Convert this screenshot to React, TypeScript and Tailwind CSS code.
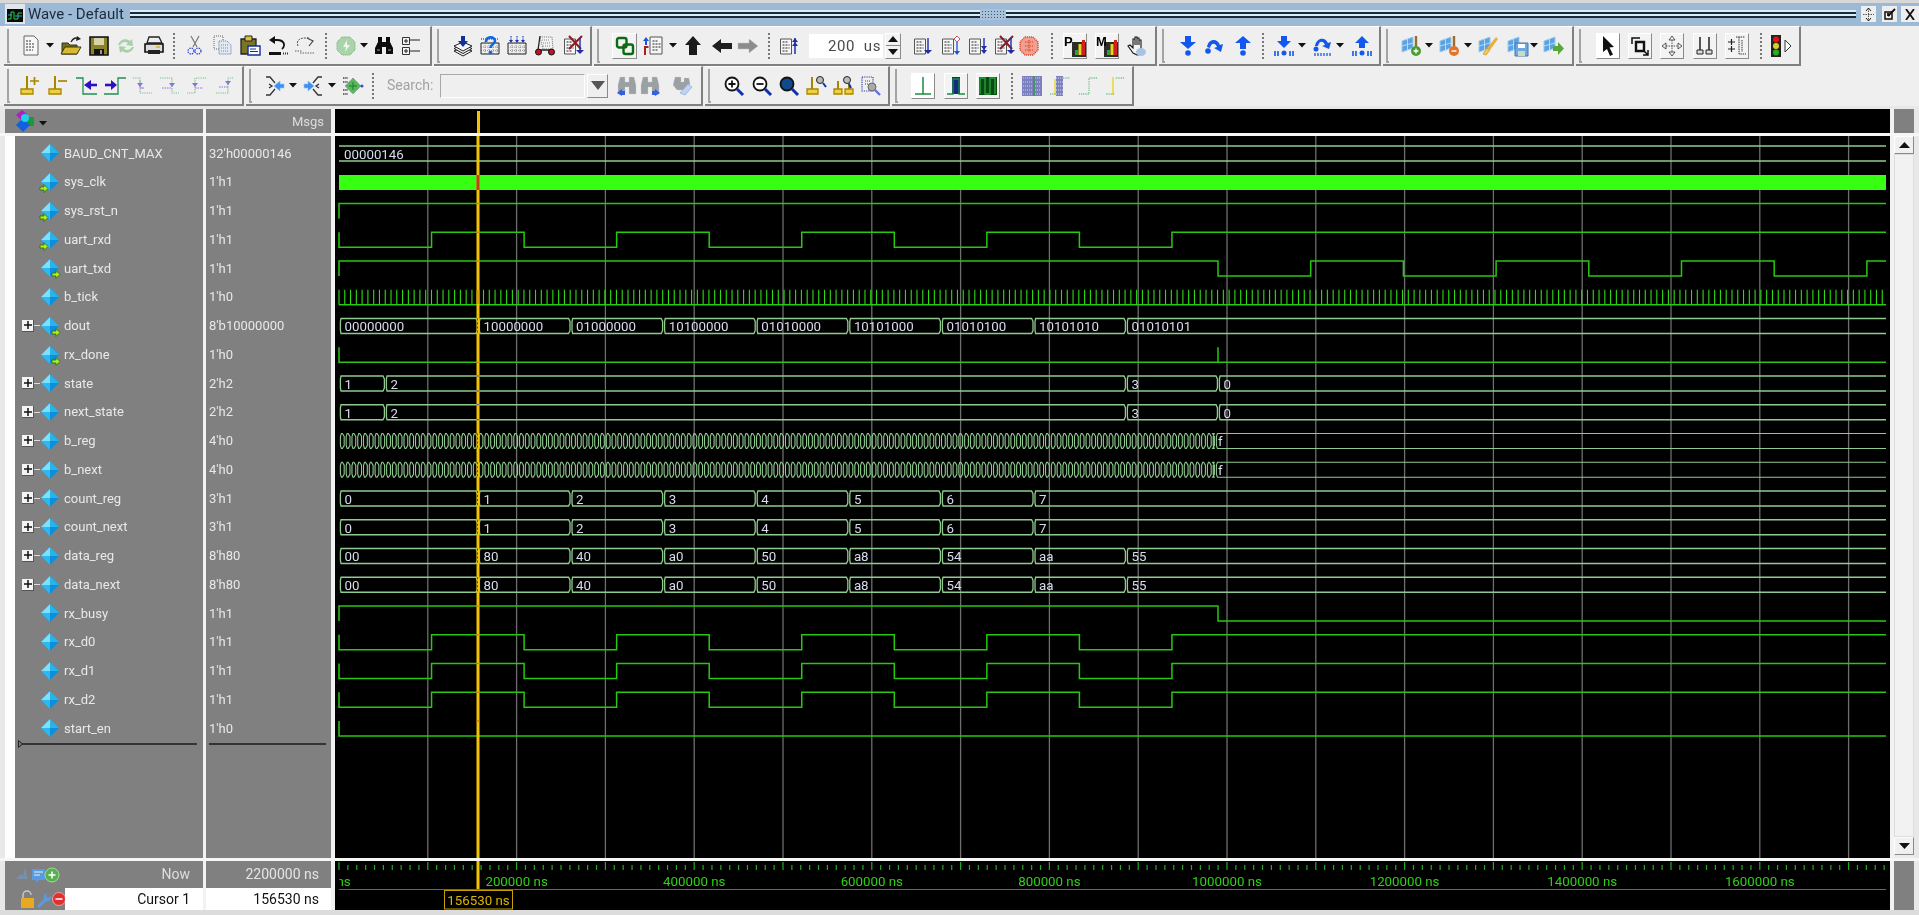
import React from "react";

type P = { c?: string; children?: React.ReactNode };

const S = ({ children }: P) => (
  <svg width="20" height="20" viewBox="0 0 20 20" className="block overflow-visible shrink-0" fill="none">
    {children}
  </svg>
);
const Ic = ({ c = "", children }: P) => (
  <div className={`w-[20px] h-[20px] shrink-0 flex items-center justify-center ${c}`}>{children}</div>
);
const Drop = ({ c = "" }: P) => (
  <div className={`w-[8px] shrink-0 flex justify-center ${c}`}>
    <svg width="8" height="5" viewBox="0 0 8 5" className="block">
      <path d="M0 0h8L4 4.5z" fill="#111" />
    </svg>
  </div>
);
const Sep = ({ c = "" }: P) => <div className={`w-[2px] h-[26px] shrink-0 border-l-2 border-dotted border-[#777] ${c}`} />;
const Btn = ({ c = "", children }: P) => (
  <div className={`w-[24px] h-[26px] shrink-0 flex items-center justify-center border border-t-white border-l-white border-b-[#8a8a8a] border-r-[#8a8a8a] bg-[#f3f3f3] ${c}`}>
    {children}
  </div>
);
const Handle = () => <div className="w-[3px] h-[34px] ml-[3px] shrink-0 border-l-2 border-b-2 border-[#a4a4a4]" />;
const Group = ({ c = "", children }: P) => (
  <div className={`h-[40px] shrink-0 flex items-center border-t border-t-white border-r-2 border-b-2 border-r-[#808080] border-b-[#808080] ${c}`}>
    <Handle />
    {children}
  </div>
);

/* ---------- document fragments ---------- */
const Doc = () => (
  <>
    <path d="M1.5 3h11v15h-11z" fill="#f6f6f6" stroke="#555" />
    <path d="M3.5 6h5M3.5 9h7M3.5 12h7M3.5 15h5" stroke="#222" strokeDasharray="2 1" />
  </>
);
const ArrowDownSm = ({ x = 15, color = "#1c2fa8" }: { x?: number; color?: string }) => (
  <>
    <path d={`M${x} 2v14`} stroke={color} strokeWidth="1.4" />
    <path d={`M${x - 4} 14h8l-4 4z`} fill={color} />
  </>
);
const Grid = () => (
  <>
    <path d="M1 7h18v11H1z" fill="#eee" stroke="#222" />
    <path d="M1 11h18M1 14.5h18M5 7v11M9 7v11M13 7v11M17 7v11" stroke="#555" strokeWidth=".6" strokeDasharray="1 1" />
  </>
);

/* ---------- row 1 ---------- */
const INew = () => (
  <S>
    <path d="M3 0h10l4 4v15H3z" fill="#f6f6f6" stroke="#666" />
    <path d="M5 5h6M5 8h9M5 11h9M5 14h7" stroke="#333" strokeDasharray="2 1" />
  </S>
);
const IOpen = () => (
  <S>
    <path d="M1 7h6l2 2h7v9H1z" fill="#746f14" stroke="#333" />
    <path d="M4 11h16l-4 7H0z" fill="#d8ba30" stroke="#3c3800" />
    <path d="M10 6C12 2 15 1 18 3" stroke="#222" strokeWidth="1.4" />
    <path d="M16 0l4 3-5 2z" fill="#222" />
  </S>
);
const ISave = () => (
  <S>
    <path d="M1 1h18v18H1z" fill="#8a8428" stroke="#111" strokeWidth="1.6" />
    <path d="M5 2h10v7H5z" fill="#d8d4a8" />
    <path d="M5 13h10v6H5z" fill="#111" />
    <path d="M11 14h2v4h-2z" fill="#999" />
  </S>
);
const IReload = () => (
  <S>
    <path d="M2 9C4 3 10 2 14 5l2-2 1 7-7-1 2-2C9 5 6 6 4 9z" fill="#a7d0a7" />
    <path d="M18 11c-2 6-8 7-12 4l-2 2-1-7 7 1-2 2c3 2 6 1 8-2z" fill="#a7d0a7" />
  </S>
);
const IPrint = () => (
  <S>
    <path d="M5 1h10l3 6H3z" fill="#eee" stroke="#222" strokeWidth="1.3" />
    <path d="M1 8h18v8H1z" fill="#ddd" stroke="#111" strokeWidth="1.6" />
    <path d="M4 14h12v4H4z" fill="#222" />
    <path d="M12 10h4v2h-4z" fill="#d8c040" />
  </S>
);
const ICut = () => (
  <S>
    <path d="M6 0l6 11M14 0L8 11" stroke="#777" strokeWidth="1.2" />
    <circle cx="6" cy="15" r="3" stroke="#2a3fd8" strokeDasharray="1.4 1" strokeWidth="1.3" />
    <circle cx="13" cy="15" r="3" stroke="#2a3fd8" strokeDasharray="1.4 1" strokeWidth="1.3" />
  </S>
);
const ICopy = () => (
  <S>
    <path d="M1 0h9v13H1z" stroke="#666" strokeDasharray="1 1" />
    <path d="M6 5h8l4 4v9H6z" stroke="#6a82c0" strokeDasharray="1.2 .8" fill="#e4e8f0" />
    <path d="M8 9h8M8 12h8M8 15h8" stroke="#888" strokeDasharray="1 1" />
  </S>
);
const IPaste = () => (
  <S>
    <path d="M1 3h15v15H1z" fill="#7a7428" stroke="#222" strokeWidth="1.3" />
    <path d="M5 0h7v5H5z" fill="#d8c040" stroke="#222" />
    <path d="M8 10h12v9H8z" fill="#fff" stroke="#10309c" strokeWidth="1.4" />
    <path d="M10 13h6M10 15.500h8" stroke="#10309c" />
  </S>
);
const IUndo = () => (
  <S>
    <path d="M14 13c4-4 2-9-5-9H6" stroke="#111" strokeWidth="1.8" />
    <path d="M7 0L1 4l6 4z" fill="#111" />
    <path d="M1 16h12v3H1z" fill="#111" />
    <path d="M15 17.500h5" stroke="#333" strokeDasharray="1 1" strokeWidth="2" />
  </S>
);
const IRedo = () => (
  <S>
    <path d="M3 10c-2-5 1-8 7-8h4" stroke="#555" strokeDasharray="2 1" />
    <path d="M12 2l6 3-4 5" stroke="#444" strokeWidth="1.2" />
    <path d="M0 15h7M5 17h14" stroke="#666" strokeDasharray="1.5 1" strokeWidth="1.2" />
  </S>
);
const IComp = () => (
  <S>
    <path d="M6 1h8l5 5v8l-5 5H6l-5-5V6z" fill="#a9d4a9" stroke="#8ab88a" strokeDasharray="1.5 .6" />
    <path d="M11 4l-4 7h3l-1 5 5-7h-3z" fill="#eef7ea" />
  </S>
);
const IBino = () => (
  <S>
    <path d="M4 1h4v5h4V1h4v5l3 6v6h-7v-7H8v7H1v-6l3-6z" fill="#0c0c0c" />
    <path d="M3 13h3v2H3zM14 13h3v2h-3z" fill="#555" />
  </S>
);
const ITree = () => (
  <S>
    <path d="M1.500 1.500h7v7h-7zM1.500 11.500h7v7h-7z" fill="#f2f2f2" stroke="#333" />
    <path d="M3 5h4M5 3v4M3 15h4M5 13v4M9 4h10M9 15h10" stroke="#222" />
  </S>
);
const IStack = () => (
  <S>
    <path d="M10 11l9 4-9 5-9-5z" fill="#eee" stroke="#222" />
    <path d="M10 8.500l9 4-9 5-9-5z" fill="#eee" stroke="#222" />
    <path d="M10 6l9 4-9 5-9-5z" fill="#f6f6f6" stroke="#222" />
    <path d="M8 0h4v5h3l-5 6-5-6h3z" fill="#10309c" />
  </S>
);
const IHelp = () => (
  <S>
    <Grid />
    <path d="M1 3h18" stroke="#4060d0" strokeDasharray="1 1" strokeWidth="1.5" />
    <path d="M6 6c0-6 9-6 9-1 0 3-4.500 3-4.500 7" stroke="#1266e0" strokeWidth="2.600" />
    <circle cx="10.500" cy="16.500" r="1.800" fill="#1266e0" />
  </S>
);
const ITabArrows = () => (
  <S>
    <Grid />
    <path d="M4 0v4M10 0v4M16 0v4" stroke="#2a48c8" strokeWidth="1.3" strokeDasharray="1 .6" />
    <path d="M2 4h4l-2 3zM8 4h4l-2 3zM14 4h4l-2 3z" fill="#1c30b0" />
  </S>
);
const ICart = () => (
  <S>
    <path d="M5 1h12l1 12H8z" fill="#f2f2f2" stroke="#888" strokeDasharray="1.2 .8" />
    <path d="M7 4h8M8 7h8M8 10h8" stroke="#8a8a8a" strokeDasharray="1 1" />
    <path d="M5 0l-2 14M3 14h14" stroke="#222" strokeWidth="1.3" />
    <circle cx="3.500" cy="16" r="3" fill="#c01424" stroke="#111" />
    <circle cx="16.500" cy="16" r="3" fill="#c01424" stroke="#111" />
  </S>
);
const IDocX = () => (
  <S>
    <Doc />
    <path d="M6 0l12 13M19 0L6 13" stroke="#8c1c20" strokeWidth="2" />
    <ArrowDownSm x={17} />
  </S>
);
const IChain = () => (
  <svg width="20" height="20" viewBox="0 0 20 20" fill="none">
    <rect x="2" y="2" width="9.500" height="9.500" rx="2" stroke="#0b6a12" strokeWidth="2.400" />
    <rect x="8.500" y="8.500" width="9.500" height="9.500" rx="2" stroke="#0b6a12" strokeWidth="2.400" />
  </svg>
);
const IStep = () => (
  <S>
    <path d="M7 1h12v17H7z" fill="#f6f6f6" stroke="#555" />
    <path d="M9.500 5h6M9.500 8h8M9.500 11h8M9.500 14h6" stroke="#222" strokeDasharray="2 1" />
    <path d="M3 9V4" stroke="#1c54e0" strokeWidth="2" />
    <path d="M0 5l3-4 3 4z" fill="#1c54e0" />
    <path d="M5.500 11H2v8" stroke="#a82020" strokeWidth="2" />
  </S>
);
const IUp = () => (
  <S>
    <path d="M10 0l8 9h-4v10H6V9H2z" fill="#1b1b1b" />
  </S>
);
const ILeft = () => (
  <S>
    <path d="M0 10l9-7v4h11v6H9v4z" fill="#1f1f1f" />
  </S>
);
const IRight = () => (
  <S>
    <path d="M20 10l-9-7v4H0v6h11v4z" fill="#8c8c8c" stroke="#c4c4c4" strokeDasharray="1 1" />
  </S>
);
const IDocTop = () => (
  <S>
    <Doc />
    <path d="M16 2v16" stroke="#1c2fa8" strokeWidth="1.500" />
    <path d="M13 6l3-4 3 4zM13 10l3-4 3 4z" fill="#1c2fa8" />
  </S>
);
const IDocDn1 = () => (
  <S>
    <Doc />
    <ArrowDownSm />
  </S>
);
const IDocDn2 = () => (
  <S>
    <Doc />
    <path d="M16 6v9" stroke="#1c54d0" strokeWidth="1.300" />
    <path d="M13 15h6l-3 4z" fill="#1c54d0" />
    <path d="M16 0l3 3-3 3-3-3z" fill="#fff" stroke="#d85060" />
  </S>
);
const IDocDn3 = () => (
  <S>
    <Doc />
    <path d="M16 2v14" stroke="#1c2fa8" strokeWidth="1.400" />
    <path d="M13 10h6l-3 4zM13 14h6l-3 4z" fill="#1c2fa8" />
  </S>
);
const IStop = () => (
  <S>
    <path d="M6 1h8l5 5v8l-5 5H6l-5-5V6z" fill="#f0a090" stroke="#e04a30" strokeWidth="1.400" strokeDasharray="1.200 .8" />
    <path d="M6 6h8M6 10h8M6 14h8M10 4v12" stroke="#e85a3c" strokeWidth="1.600" strokeDasharray="1.300 1" />
  </S>
);
const Bars = ({ l }: { l: string }) => (
  <svg width="22" height="22" viewBox="0 0 22 22" fill="none">
    <path d="M8 7h14v15H8z" fill="#2c2c2c" />
    <path d="M11 15h3v5h-3z" fill="#1faa30" />
    <path d="M14.500 9h3v11h-3z" fill="#e8d818" />
    <path d="M18 5h3v15h-3z" fill="#d02020" />
    <text x="0" y="11" fontSize="13" fontWeight="700" fill="#000" fontFamily="Liberation Sans, sans-serif">{l}</text>
  </svg>
);
const IHand = () => (
  <S>
    <path d="M6 17L1 10l2-1 3 3V3l2 0 0 6V1h2v8V2h2v7V4h2v9c0 4-2 6-4 6z" fill="#f4f4f4" stroke="#111" strokeWidth="1.100" />
    <ellipse cx="14" cy="16" rx="5" ry="4" fill="#a8c4e4" />
  </S>
);
const B = "#1358ee";
const IDnDot = () => (
  <S>
    <path d="M7 0h6v6h5l-8 7-8-7h5z" fill={B} />
    <circle cx="10" cy="17" r="2.800" fill={B} />
  </S>
);
const IOver = () => (
  <S>
    <path d="M3 11C4 3 13 1 16 9l3-1-2 8-7-4 3-1c-2-5-6-4-7 1z" fill={B} />
    <circle cx="4" cy="15" r="2.800" fill={B} />
  </S>
);
const IUpDot = () => (
  <S>
    <path d="M10 0l8 7h-5v6H7V7H2z" fill={B} />
    <circle cx="10" cy="17" r="2.800" fill={B} />
  </S>
);
const BarsB = () => <path d="M1 15v5M4 15v5M16 15v5M19 15v5" stroke={B} strokeWidth="1.600" />;
const IDnBar = () => (
  <S>
    <path d="M7 0h6v5h4l-7 7-7-7h4z" fill={B} />
    <circle cx="10" cy="17" r="2.500" fill={B} />
    <BarsB />
  </S>
);
const IOverBar = () => (
  <S>
    <path d="M3 10C4 2 13 0 16 7l3-1-2 7-7-3 3-1c-2-5-6-4-7 1z" fill={B} />
    <circle cx="4" cy="13" r="2.500" fill={B} />
    <path d="M3 17v3M6 17v3M9 17v3M12 17v3M15 17v3M18 17v3" stroke={B} strokeWidth="1.300" />
  </S>
);
const IUpBar = () => (
  <S>
    <path d="M10 0l7 7h-4v5H7V7H3z" fill={B} />
    <circle cx="10" cy="17" r="2.500" fill={B} />
    <BarsB />
  </S>
);
const Win = () => (
  <>
    <path d="M0 5l11-4v11L0 16z" fill="#5aa2e2" stroke="#9ccaf0" />
    <path d="M5.500 3v11M0 10l11-3" stroke="#cde4f8" strokeWidth=".8" />
  </>
);
const IWinAdd = () => (
  <S>
    <Win />
    <path d="M14 0v10" stroke="#9a6a30" strokeWidth="2.400" />
    <circle cx="14" cy="15" r="5" fill="#4a9c30" />
    <path d="M11.500 15h5M14 12.500v5" stroke="#fff" strokeWidth="1.400" />
  </S>
);
const IWinDel = () => (
  <S>
    <Win />
    <path d="M14 0v10" stroke="#9a6a30" strokeWidth="2.400" />
    <circle cx="14" cy="15" r="5" fill="#e0742a" />
    <path d="M11.500 15h5" stroke="#fff" strokeWidth="1.400" />
  </S>
);
const IWinBrush = () => (
  <S>
    <Win />
    <path d="M17 1l2 2-8 11-3-2z" fill="#e8b040" />
    <path d="M8 12l3 2-4 5-3-1z" fill="#f0c860" stroke="#c89020" strokeWidth=".7" />
  </S>
);
const IWinSave = () => (
  <S>
    <Win />
    <path d="M7 7h13v13H7z" fill="#6ea8e0" stroke="#3e78c0" />
    <path d="M10 8h7v4h-7z" fill="#fff" />
    <path d="M10 15h7v5h-7z" fill="#c8dcc0" />
  </S>
);
const IWinGo = () => (
  <S>
    <Win />
    <path d="M9 10h5V6l6 6.500-6 6.500v-4H9z" fill="#58a838" />
  </S>
);
const IPtr = () => (
  <svg width="18" height="20" viewBox="0 0 18 20">
    <path d="M4 0l11 11-4.500 .5 3.500 7-3 1.500-3-7-4 3z" fill="#111" />
  </svg>
);
const IZoomBox = () => (
  <svg width="20" height="20" viewBox="0 0 20 20" fill="none">
    <path d="M2 8V2h8" stroke="#111" strokeWidth="1.500" />
    <path d="M6 6h8v9H6z" stroke="#111" strokeWidth="2.400" />
    <path d="M14 15l4 4M18 14v5h-5" stroke="#111" strokeWidth="1.500" />
  </svg>
);
const IMove = () => (
  <svg width="20" height="20" viewBox="0 0 20 20" fill="none">
    <path d="M10 0l3 4H7zM10 20l3-4H7zM0 10l4-3v6zM20 10l-4-3v6z" fill="#f2f2f2" stroke="#333" strokeWidth=".8" />
    <path d="M10 4v12M4 10h12" stroke="#555" strokeDasharray="1.500 1" />
  </svg>
);
const ICurs2 = () => (
  <svg width="20" height="20" viewBox="0 0 20 20" fill="none">
    <path d="M5 1v13M14 1v13" stroke="#222" strokeWidth="1.500" />
    <path d="M2 14h6v4H2zM11 14h6v4h-6z" stroke="#222" fill="#ddd" />
  </svg>
);
const ICurLines = () => (
  <svg width="20" height="20" viewBox="0 0 20 20" fill="none">
    <path d="M9 1h9M12 1v17h7M15 4v12" stroke="#333" strokeDasharray="1.500 .8" />
    <path d="M1 6h7M4.500 3v6M1 13h7M4.500 10v6" stroke="#222" strokeWidth="1.200" />
  </svg>
);
const ILight = () => (
  <svg width="22" height="24" viewBox="0 0 22 24" className="block shrink-0" fill="none">
    <path d="M1 1h10v22H1z" fill="#222" />
    <circle cx="6" cy="5.500" r="3" fill="#ee1010" />
    <circle cx="6" cy="12" r="3" fill="#d8d020" />
    <circle cx="6" cy="18.500" r="3" fill="#20b020" />
    <path d="M15 6l6 6-6 6z" fill="#fff" stroke="#333" />
  </svg>
);

/* ---------- row 2 ---------- */
const Y = "#f0d040";
const YS = "#a88600";
const Cur = ({ x = 7 }: { x?: number }) => (
  <>
    <path d={`M${x} 0v13`} stroke={YS} strokeWidth="2" />
    <path d={`M${x - 6} 13h12v5h-12z`} fill={Y} stroke={YS} strokeWidth="1.300" />
  </>
);
const ICurAdd = () => (
  <S>
    <Cur />
    <path d="M10 5h9M14.500 1v8" stroke={YS} strokeWidth="1.700" />
  </S>
);
const ICurDel = () => (
  <S>
    <Cur />
    <path d="M10 5h9" stroke={YS} strokeWidth="1.700" />
  </S>
);
const G = "#209050";
const IEdgeL = () => (
  <S>
    <path d="M-2 2h7v16h14" stroke={G} strokeWidth="1.300" />
    <path d="M19 9h-8" stroke="#2a10c0" strokeWidth="2.600" />
    <path d="M13 4l-7 5 7 5z" fill="#2a10c0" />
  </S>
);
const IEdgeR = () => (
  <S>
    <path d="M22 2h-8v16H0" stroke={G} strokeWidth="1.300" />
    <path d="M1 9h8" stroke="#2a10c0" strokeWidth="2.600" />
    <path d="M7 4l6 5-6 5z" fill="#2a10c0" />
  </S>
);
const LG = "#79c08a";
const P2 = "#8a70e0";
const IDot1 = () => (
  <S>
    <path d="M0 2h7v15h12" stroke={LG} strokeDasharray="1.200 1" strokeWidth="1.200" />
    <path d="M7 5v7" stroke={P2} strokeDasharray="1 .8" />
    <path d="M4 7h6l-3 4zM10 12h5" fill={P2} />
    <path d="M11 12h-4" stroke={P2} />
  </S>
);
const IDot2 = () => (
  <S>
    <path d="M1 2h12v15h7" stroke={LG} strokeDasharray="1.200 1" strokeWidth="1.200" />
    <path d="M10 7h6l-3 4z" fill={P2} />
    <path d="M3 12h10" stroke={P2} strokeDasharray="1.500 1" />
  </S>
);
const IDot3 = () => (
  <S>
    <path d="M19 2H8v15H0" stroke={LG} strokeDasharray="1.200 1" strokeWidth="1.200" />
    <path d="M5 7h6l-3 4z" fill={P2} />
    <path d="M8 12h8" stroke={P2} strokeDasharray="1.500 1" />
  </S>
);
const IDot4 = () => (
  <S>
    <path d="M19 2h-5v15H1" stroke={LG} strokeDasharray="1.200 1" strokeWidth="1.200" />
    <path d="M11 5h6l-3 4z" fill={P2} />
    <path d="M5 11h9" stroke={P2} strokeDasharray="1.500 1" />
  </S>
);
const IMergeL = () => (
  <S>
    <path d="M1 1h4l5 6M1 19h4l5-6M4 8l3 2-3 2" stroke="#333" strokeWidth="1.300" />
    <path d="M19 8h-4V5l-6 5 6 5v-3h4z" fill="#3a90f0" stroke="#90c0f8" strokeDasharray="1 .5" />
  </S>
);
const IMergeR = () => (
  <S>
    <path d="M19 1h-4l-5 6M19 19h-4l-5-6M16 8l-3 2 3 2" stroke="#333" strokeWidth="1.300" />
    <path d="M1 8h4V5l6 5-6 5v-3H1z" fill="#3a90f0" stroke="#90c0f8" strokeDasharray="1 .5" />
  </S>
);
const IMergeC = () => (
  <S>
    <path d="M1 2h5M1 6h5M1 14h5M1 18h5" stroke="#444" strokeDasharray="1.500 .7" strokeWidth="1.300" />
    <path d="M11 2l8 8-8 8-8-8z" fill="#58b860" stroke="#888" strokeDasharray="1 1" />
    <path d="M7 10h8M11 6v8" stroke="#1e7a2c" />
    <circle cx="20" cy="10" r="1.500" fill="#3050d0" />
  </S>
);
const SBino = () => (
  <path d="M3 1h5v5h4V1h5l2 8v9h-7v-7H8v7H1V9z" fill="#9aa0a4" stroke="#d0d0d0" strokeWidth=".7" strokeDasharray="1 1" />
);
const ISrch1 = () => (
  <S>
    <SBino />
    <path d="M0 17l5-4v2h3v4H5v1z" fill="#3060e8" />
  </S>
);
const ISrch2 = () => (
  <S>
    <SBino />
    <path d="M20 17l-5-4v2h-3v4h3v1z" fill="#3060e8" />
  </S>
);
const ISrch3 = () => (
  <S>
    <path d="M3 1h6v5h3V2h5l1 6-6 6H5L1 9z" fill="#9aa0a4" stroke="#d0d0d0" strokeWidth=".7" strokeDasharray="1 1" />
    <path d="M16 8l4 3-7 8-5-2z" fill="#bfd4f0" stroke="#8aa8e0" strokeWidth=".7" />
  </S>
);
const Mag = ({ fill = "#fff" }: { fill?: string }) => (
  <>
    <circle cx="8" cy="8" r="6.500" fill={fill} stroke="#111" strokeWidth="1.800" />
    <path d="M13 13l6 6" stroke="#1030b0" strokeWidth="3" />
  </>
);
const IZin = () => (
  <S>
    <Mag />
    <path d="M4.500 8h7M8 4.500v7" stroke="#111" strokeWidth="1.800" />
  </S>
);
const IZout = () => (
  <S>
    <Mag />
    <path d="M4.500 8h7" stroke="#111" strokeWidth="1.800" />
  </S>
);
const IZfull = () => (
  <S>
    <Mag fill="#0e4a8c" />
  </S>
);
const ICurMag = () => (
  <S>
    <path d="M5 1v13" stroke={YS} strokeWidth="2" />
    <path d="M0 13h11v5H0z" fill={Y} stroke={YS} strokeWidth="1.300" />
    <circle cx="13" cy="4" r="3.500" fill="#bbb" stroke="#222" />
    <path d="M16 7l3 4" stroke="#1030b0" strokeWidth="2" />
  </S>
);
const ICur2Mag = () => (
  <S>
    <path d="M4 5v9M15 5v9" stroke={YS} strokeWidth="2" />
    <path d="M0 13h8v5H0zM11 13h8v5h-8z" fill={Y} stroke={YS} strokeWidth="1.300" />
    <circle cx="13" cy="4" r="3.500" fill="#bbb" stroke="#222" />
    <path d="M15 8l2 4" stroke="#1030b0" strokeWidth="2" />
  </S>
);
const IDocMag = () => (
  <S>
    <path d="M1 1h11v14H1z" stroke="#3040a8" strokeDasharray="1.200 1" strokeWidth="1.200" />
    <path d="M4 5h5M4 8h4" stroke="#3040a8" strokeDasharray="1 1" />
    <circle cx="11" cy="11" r="4" fill="#aaa" stroke="#666" />
    <path d="M14 14l5 5" stroke="#6070e0" strokeWidth="2.400" />
  </S>
);
const IWave1 = () => (
  <svg width="20" height="22" viewBox="0 0 20 22" fill="none">
    <path d="M10 2v17M2 19h16" stroke="#189040" strokeWidth="1.500" />
  </svg>
);
const IWave2 = () => (
  <svg width="20" height="22" viewBox="0 0 20 22" fill="none">
    <path d="M6 2h8v17H6z" fill="#172a80" />
    <path d="M1 19h6V4h6v15h6" stroke="#189040" strokeWidth="1.300" />
  </svg>
);
const IWave3 = () => (
  <svg width="20" height="22" viewBox="0 0 20 22" fill="none">
    <path d="M1 2h18v18H1z" fill="#0a4a12" />
    <path d="M2 19V3h5v16h5V3h5v16" stroke="#22a83a" strokeWidth="1.300" />
  </svg>
);
const IHatch = () => (
  <S>
    <path d="M0 0h20v20H0z" fill="#7a80c0" />
    <path d="M1 2h18M1 6h18M1 10h18M1 14h18M1 18h18" stroke="#d8d8e8" strokeDasharray="1 1" strokeWidth=".9" />
    <path d="M12 0v20" stroke="#4a9060" strokeWidth="2" />
  </S>
);
const IHatch2 = () => (
  <S>
    <path d="M6 0h7v20H6z" fill="#7a80c0" />
    <path d="M6 2h7M6 6h7M6 10h7M6 14h7M6 18h7" stroke="#d8d8e8" strokeDasharray="1 1" />
    <path d="M5 3v16" stroke="#e8d820" strokeWidth="1.300" />
    <path d="M13 2h7M0 18h6" stroke={LG} strokeDasharray="1.200 1" strokeWidth="1.300" />
  </S>
);
const IStepDot = () => (
  <S>
    <path d="M19 2h-8v16H1" stroke={LG} strokeDasharray="1.200 1" strokeWidth="1.300" />
  </S>
);
const IStepYel = () => (
  <S>
    <path d="M8 1v18" stroke="#e8d820" strokeWidth="1.400" />
    <path d="M19 2h-9M9 18H1" stroke={LG} strokeDasharray="1.200 1" strokeWidth="1.300" />
  </S>
);

/* ---------- title bar ---------- */
const Stripes = () => (
  <div className="flex-1 flex flex-col">
    <div className="h-[2px] bg-[#dcecf8]" />
    <div className="h-[2px] bg-[#1c2a38]" />
    <div className="h-[2px] bg-[#d6eefa]" />
    <div className="h-[2px] bg-[#1c2a38]" />
  </div>
);

const TitleBar = () => (
  <div className="h-[26px] shrink-0 flex flex-col bg-[#9cb9d5]">
    <div className="h-[3px] bg-[#d8d8d8]" />
    <div className="h-[22px] flex items-center">
      <svg width="20" height="20" viewBox="0 0 20 20" className="ml-[5px] shrink-0">
        <path d="M0 0h20v20H0z" fill="#dfe6ec" />
        <path d="M2 5h16v13H2z" fill="#0a0a0a" />
        <path d="M3 15h3V8h3v7h4V9h4" stroke="#22d040" fill="none" />
        <path d="M3 11h4M10 12h7" stroke="#30a0e0" fill="none" />
      </svg>
      <span className="ml-[3px] w-[99px] shrink-0 text-[15px] leading-[20px] text-[#1c2c3c]">Wave - Default</span>
      <div className="w-[3px] shrink-0" />
      <Stripes />
      <svg width="26" height="11" viewBox="0 0 26 11" className="shrink-0 bg-[#a8c2da]">
        <path d="M2 2.500h22M2 5.500h22M2 8.500h22" stroke="#3a5a78" strokeDasharray="1 2" />
      </svg>
      <Stripes />
      <div className="w-[15px] h-[16px] ml-[5px] shrink-0 bg-[#eeeeee] flex items-center justify-center">
        <svg width="11" height="13" viewBox="0 0 11 13" fill="none">
          <path d="M5.500 0v13M0 6.500h11" stroke="#555" strokeDasharray="1.500 1" />
          <path d="M3 3l2.500-3L8 3M3 10l2.500 3L8 10" stroke="#222" />
        </svg>
      </div>
      <div className="w-[15px] h-[16px] ml-[6px] shrink-0 bg-[#eeeeee] flex items-center justify-center">
        <svg width="12" height="12" viewBox="0 0 12 12" fill="none">
          <path d="M1 4h7v7H1z" stroke="#111" strokeWidth="1.500" />
          <path d="M4 8l7-7M6 7h-2V5" stroke="#111" strokeWidth="1.800" />
        </svg>
      </div>
      <div className="w-[18px] h-[16px] ml-[4px] shrink-0 bg-[#eeeeee] flex items-center justify-center">
        <svg width="10" height="11" viewBox="0 0 10 11" fill="none">
          <path d="M1 0l8 11M9 0L1 11" stroke="#111" strokeWidth="1.800" />
        </svg>
      </div>
    </div>
  </div>
);

/* ---------- toolbars ---------- */
const Toolbars = () => (
  <div className="h-[80px] shrink-0 flex flex-col bg-[#efefef]">
    <div className="h-[40px] flex gap-[2px] pl-[4px]">
      <Group c="w-[428px]">
        <Ic c="ml-[11px]"><INew /></Ic>
        <Drop c="ml-[5px]" />
        <Ic c="ml-[7px]"><IOpen /></Ic>
        <Ic c="ml-[8px]"><ISave /></Ic>
        <Ic c="ml-[7px]"><IReload /></Ic>
        <Ic c="ml-[8px]"><IPrint /></Ic>
        <Sep c="ml-[9px]" />
        <Ic c="ml-[10px]"><ICut /></Ic>
        <Ic c="ml-[8px]"><ICopy /></Ic>
        <Ic c="ml-[7px]"><IPaste /></Ic>
        <Ic c="ml-[8px]"><IUndo /></Ic>
        <Ic c="ml-[7px]"><IRedo /></Ic>
        <Sep c="ml-[10px]" />
        <Ic c="ml-[9px]"><IComp /></Ic>
        <Drop c="ml-[4px]" />
        <Ic c="ml-[6px]"><IBino /></Ic>
        <Ic c="ml-[7px]"><ITree /></Ic>
      </Group>
      <Group c="w-[158px]">
        <Ic c="ml-[13px]"><IStack /></Ic>
        <Ic c="ml-[7px]"><IHelp /></Ic>
        <Ic c="ml-[7px]"><ITabArrows /></Ic>
        <Ic c="ml-[8px]"><ICart /></Ic>
        <Ic c="ml-[8px]"><IDocX /></Ic>
      </Group>
      <Group c="w-[563px]">
        <Btn c="ml-[12px] !w-[25px]"><IChain /></Btn>
        <Ic c="ml-[6px]"><IStep /></Ic>
        <Drop c="ml-[6px]" />
        <Ic c="ml-[6px]"><IUp /></Ic>
        <Ic c="ml-[9px]"><ILeft /></Ic>
        <Ic c="ml-[6px]"><IRight /></Ic>
        <Sep c="ml-[10px]" />
        <Ic c="ml-[9px]"><IDocTop /></Ic>
        <div className="ml-[10px] w-[74px] h-[24px] shrink-0 bg-white text-[15px] leading-[24px] text-[#4a4a4a] flex justify-end pr-[2px] tracking-[0.6px] whitespace-pre">
          200  us
        </div>
        <div className="ml-[2px] w-[16px] h-[26px] shrink-0 flex flex-col border border-b-[#8a8a8a] border-r-[#8a8a8a] border-t-white border-l-white bg-[#f3f3f3]">
          <div className="flex-1 flex items-center justify-center border-b border-b-[#8a8a8a]">
            <svg width="10" height="6" viewBox="0 0 10 6"><path d="M5 0l5 6H0z" fill="#111" /></svg>
          </div>
          <div className="flex-1 flex items-center justify-center">
            <svg width="10" height="6" viewBox="0 0 10 6"><path d="M0 0h10L5 6z" fill="#111" /></svg>
          </div>
        </div>
        <Ic c="ml-[12px]"><IDocDn1 /></Ic>
        <Ic c="ml-[8px]"><IDocDn2 /></Ic>
        <Ic c="ml-[7px]"><IDocDn3 /></Ic>
        <Ic c="ml-[6px]"><IDocX /></Ic>
        <Ic c="ml-[5px]"><IStop /></Ic>
        <Sep c="ml-[12px]" />
        <Btn c="ml-[10px]"><Bars l="P" /></Btn>
        <Btn c="ml-[8px]"><Bars l="M" /></Btn>
        <Ic c="ml-[8px]"><IHand /></Ic>
      </Group>
      <Group c="w-[222px]">
        <Ic c="ml-[13px]"><IDnDot /></Ic>
        <Ic c="ml-[6px]"><IOver /></Ic>
        <Ic c="ml-[9px]"><IUpDot /></Ic>
        <Sep c="ml-[9px]" />
        <Ic c="ml-[10px]"><IDnBar /></Ic>
        <Drop c="ml-[4px]" />
        <Ic c="ml-[6px]"><IOverBar /></Ic>
        <Drop c="ml-[4px]" />
        <Ic c="ml-[8px]"><IUpBar /></Ic>
      </Group>
      <Group c="w-[191px]">
        <Ic c="ml-[13px]"><IWinAdd /></Ic>
        <Drop c="ml-[3px]" />
        <Ic c="ml-[7px]"><IWinDel /></Ic>
        <Drop c="ml-[4px]" />
        <Ic c="ml-[7px]"><IWinBrush /></Ic>
        <Ic c="ml-[9px]"><IWinSave /></Ic>
        <Drop c="ml-[2px]" />
        <Ic c="ml-[6px]"><IWinGo /></Ic>
      </Group>
      <Group c="w-[225px]">
        <Btn c="ml-[14px] !bg-white"><IPtr /></Btn>
        <Btn c="ml-[8px]"><IZoomBox /></Btn>
        <Btn c="ml-[8px]"><IMove /></Btn>
        <Btn c="ml-[9px]"><ICurs2 /></Btn>
        <Btn c="ml-[8px]"><ICurLines /></Btn>
        <Sep c="ml-[11px]" />
        <div className="ml-[8px] shrink-0"><ILight /></div>
      </Group>
    </div>
    <div className="h-[40px] flex gap-[2px] pl-[4px]">
      <Group c="w-[240px]">
        <Ic c="ml-[10px]"><ICurAdd /></Ic>
        <Ic c="ml-[8px]"><ICurDel /></Ic>
        <Ic c="ml-[10px]"><IEdgeL /></Ic>
        <Ic c="ml-[6px]"><IEdgeR /></Ic>
        <Ic c="ml-[9px]"><IDot1 /></Ic>
        <Ic c="ml-[6px]"><IDot2 /></Ic>
        <Ic c="ml-[8px]"><IDot3 /></Ic>
        <Ic c="ml-[7px]"><IDot4 /></Ic>
      </Group>
      <Group c="w-[457px]">
        <Ic c="ml-[13px]"><IMergeL /></Ic>
        <Drop c="ml-[4px]" />
        <Ic c="ml-[6px]"><IMergeR /></Ic>
        <Drop c="ml-[5px]" />
        <Ic c="ml-[6px]"><IMergeC /></Ic>
        <Sep c="ml-[10px]" />
        <span className="ml-[13px] w-[46px] shrink-0 text-[14px] text-[#a2a2a2]">Search:</span>
        <div className="ml-[7px] w-[145px] h-[24px] shrink-0 bg-[#efefef] border border-t-[#a8a8a8] border-l-[#a8a8a8] border-b-white border-r-white" />
        <div className="ml-[2px] w-[21px] h-[24px] shrink-0 flex items-center justify-center border border-t-white border-l-white border-b-[#8a8a8a] border-r-[#8a8a8a]">
          <svg width="14" height="9" viewBox="0 0 14 9"><path d="M0 0h14L7 9z" fill="#555" /></svg>
        </div>
        <Ic c="ml-[9px]"><ISrch1 /></Ic>
        <Ic c="ml-[3px]"><ISrch2 /></Ic>
        <Ic c="ml-[12px]"><ISrch3 /></Ic>
      </Group>
      <Group c="w-[185px]">
        <Ic c="ml-[13px]"><IZin /></Ic>
        <Ic c="ml-[8px]"><IZout /></Ic>
        <Ic c="ml-[7px]"><IZfull /></Ic>
        <Ic c="ml-[8px]"><ICurMag /></Ic>
        <Ic c="ml-[7px]"><ICur2Mag /></Ic>
        <Ic c="ml-[7px]"><IDocMag /></Ic>
      </Group>
      <Group c="w-[242px]">
        <Btn c="ml-[13px] !bg-white"><IWave1 /></Btn>
        <Btn c="ml-[9px]"><IWave2 /></Btn>
        <Btn c="ml-[8px]"><IWave3 /></Btn>
        <Sep c="ml-[11px]" />
        <Ic c="ml-[9px]"><IHatch /></Ic>
        <Ic c="ml-[8px]"><IHatch2 /></Ic>
        <Ic c="ml-[8px]"><IStepDot /></Ic>
        <Ic c="ml-[7px]"><IStepYel /></Ic>
      </Group>
    </div>
  </div>
);

/* ---------- signal list ---------- */
type Sig = { n: string; v: string; plus?: boolean; dir?: "in" | "out" };
const SIGNALS: Sig[] = [
  { n: "BAUD_CNT_MAX", v: "32'h00000146" },
  { n: "sys_clk", v: "1'h1", dir: "in" },
  { n: "sys_rst_n", v: "1'h1", dir: "in" },
  { n: "uart_rxd", v: "1'h1", dir: "in" },
  { n: "uart_txd", v: "1'h1", dir: "out" },
  { n: "b_tick", v: "1'h0" },
  { n: "dout", v: "8'b10000000", plus: true, dir: "out" },
  { n: "rx_done", v: "1'h0", dir: "out" },
  { n: "state", v: "2'h2", plus: true },
  { n: "next_state", v: "2'h2", plus: true },
  { n: "b_reg", v: "4'h0", plus: true },
  { n: "b_next", v: "4'h0", plus: true },
  { n: "count_reg", v: "3'h1", plus: true },
  { n: "count_next", v: "3'h1", plus: true },
  { n: "data_reg", v: "8'h80", plus: true },
  { n: "data_next", v: "8'h80", plus: true },
  { n: "rx_busy", v: "1'h1" },
  { n: "rx_d0", v: "1'h1" },
  { n: "rx_d1", v: "1'h1" },
  { n: "rx_d2", v: "1'h1" },
  { n: "start_en", v: "1'h0" },
];

const Diamond = ({ dir }: { dir?: "in" | "out" }) => (
  <svg width="20" height="20" viewBox="0 0 20 20" className="shrink-0 overflow-visible block">
    <path d="M10 1l9 9-9 9-9-9z" fill="#0b8fdc" />
    <path d="M10 1v9H1z" fill="#7fe0fb" />
    <path d="M10 1l9 9h-9z" fill="#27b4ee" />
    <path d="M1 10h9v9z" fill="#2eb8f0" />
    {dir === "in" && <path d="M0 15h4v-2.500l4 4-4 4V18H0z" fill="#a8ee20" stroke="#1a6010" strokeWidth=".7" />}
    {dir === "out" && <path d="M12 15h4v-2.500l4 4-4 4V18h-4z" fill="#a8ee20" stroke="#1a6010" strokeWidth=".7" />}
  </svg>
);

const NameRow = ({ s }: { s: Sig }) => (
  <div className="h-[28.75px] flex items-center">
    {s.plus ? (
      <>
        <div className="ml-[7px] w-[12px] h-[12px] shrink-0 flex items-center justify-center bg-[#f4f4f4] border-r border-b border-[#555]">
          <svg width="8" height="8" viewBox="0 0 8 8"><path d="M0 4h8M4 0v8" stroke="#111" strokeWidth="1.500" /></svg>
        </div>
        <div className="w-[6px] h-px shrink-0 bg-[#ddd]" />
      </>
    ) : (
      <div className="ml-[7px] w-[18px] shrink-0" />
    )}
    <Diamond dir={s.dir} />
    <span className="ml-[4px] text-[13px] text-[#e8e8e8] whitespace-nowrap">{s.n}</span>
  </div>
);

/* ---------- waveforms ---------- */
const X0 = 339;
const XEND = 1886;
const top = (i: number) => 146 + 28.75 * i;
const bot = (i: number) => 161 + 28.75 * i;
const GRID = Array.from({ length: 17 }, (_, k) => X0 + 88.8 * (k + 1));
const CURSOR = 478;
const DG = "#27c80f";
const BUSG = "#8fcb8f";
const E = [339, CURSOR, 570.6, 663.2, 755.8, 848.4, 941, 1033.6, 1126];
const RX = Array.from({ length: 9 }, (_, k) => X0 + 92.55 * (k + 1));
const TX = Array.from({ length: 8 }, (_, k) => 1218 + 92.7 * k);
const T_END = 1218;
const TICKS = Array.from({ length: 268 }, (_, k) => X0 + 5.78 * k);
const TICKS_B = Array.from({ length: 152 }, (_, k) => X0 + 5.78 * k);

function digital(i: number, first: "H" | "L", edges: number[]) {
  const t = top(i);
  const b = bot(i);
  let high = first === "H";
  let d = `M${X0} ${high ? b : t}V${high ? t : b}`;
  for (const x of edges) {
    high = !high;
    d += `H${x}V${high ? t : b}`;
  }
  return d + `H${XEND}`;
}

function busPath(i: number, edges: number[], taper = 2) {
  const t = top(i);
  const b = bot(i);
  let d = "";
  edges.forEach((x0, k) => {
    const x1 = k + 1 < edges.length ? edges[k + 1] : XEND;
    const last = k + 1 === edges.length;
    d += `M${x0 + 1.4} ${b - 3}V${t + 3}L${x0 + taper} ${t}H${last ? x1 : x1 - taper}`;
    d += last ? "" : `L${x1 - 0.6} ${t + 3}V${b - 3}L${x1 - taper} ${b}`;
    d += last ? `M${x1} ${b}H${x0 + taper}L${x0 + 1.4} ${b - 3}` : `H${x0 + taper}L${x0 + 1.4} ${b - 3}`;
  });
  return d;
}

type Bus = { i: number; e: number[]; v: string[] };
const counts = ["0", "1", "2", "3", "4", "5", "6", "7"];
const dataVals = ["00", "80", "40", "a0", "50", "a8", "54", "aa", "55"];
const doutVals = ["00000000", "10000000", "01000000", "10100000", "01010000", "10101000", "01010100", "10101010", "01010101"];
const stateE = [339, 385, 1126, 1218];
const stateV = ["1", "2", "3", "0"];
const BUSES: Bus[] = [
  { i: 6, e: E, v: doutVals },
  { i: 8, e: stateE, v: stateV },
  { i: 9, e: stateE, v: stateV },
  { i: 12, e: E.slice(0, 8), v: counts },
  { i: 13, e: E.slice(0, 8), v: counts },
  { i: 14, e: E, v: dataVals },
  { i: 15, e: E, v: dataVals },
];
const DIG: [number, "H" | "L", number[]][] = [
  [2, "H", []],
  [3, "L", RX],
  [4, "H", TX],
  [7, "L", []],
  [16, "H", [T_END]],
  [17, "L", RX],
  [18, "L", RX],
  [19, "L", RX],
  [20, "L", []],
];

const WaveBody = () => (
  <svg width="1555" height="722" viewBox="335 136 1555 722" className="block shrink-0 font-['Roboto',sans-serif]" fill="none">
    {GRID.map((x) => (
      <path key={x} d={`M${x} 136V858`} stroke="#6e6e6e" strokeWidth="1.300" />
    ))}
    {/* BAUD_CNT_MAX */}
    <path d={`M${X0} ${top(0)}H${XEND}M${X0} ${bot(0)}H${XEND}`} stroke={BUSG} strokeWidth="1.300" />
    <text x="344" y="158.500" fontSize="13.300" fill="#d8dcec">00000146</text>
    {/* sys_clk */}
    <rect x={X0} y="175" width={XEND - X0} height="15" fill="#36ff12" />
    {/* digital traces */}
    {DIG.map(([i, f, e]) => (
      <path key={i} d={digital(i, f, e)} stroke={DG} strokeWidth="1.500" />
    ))}
    {/* rx_done pulse */}
    <path d={`M1218 ${top(7)}V${bot(7)}`} stroke={DG} strokeWidth="1.500" />
    {/* b_tick */}
    <path d={`M${X0} ${bot(5)}H${XEND}`} stroke={DG} strokeWidth="1.500" />
    <path d={TICKS.map((x) => `M${x} ${top(5)}V${bot(5)}`).join("")} stroke="#2fdc14" strokeWidth="1.100" />
    {/* buses */}
    {BUSES.map((b) => (
      <g key={b.i}>
        <path d={busPath(b.i, b.e)} stroke={BUSG} strokeWidth="1.300" />
        {b.v.map((t, k) => (
          <text key={k} x={b.e[k] + 5.500} y={top(b.i) + 12.800} fontSize="13.300" fill="#d8dcec">{t}</text>
        ))}
      </g>
    ))}
    {/* b_reg, b_next */}
    {[10, 11].map((i) => (
      <g key={i}>
        <path d={busPath(i, TICKS_B.concat([1215]), 2.4)} stroke={BUSG} strokeWidth="1.100" />
        <text x="1218" y={top(i) + 12.800} fontSize="13.300" fill="#d8dcec">f</text>
      </g>
    ))}
    {/* cursor */}
    <rect x="476.500" y="136" width="3" height="722" fill="#f5c400" />
    <rect x="476.500" y="175" width="3" height="15" fill="#c83a1c" />
    <rect x="476.500" y="290" width="3" height="14" fill="#d8a008" />
    {BUSES.concat([{ i: 10, e: [], v: [] }, { i: 11, e: [], v: [] }]).map((b) =>
      b.i === 8 || b.i === 9 ? (
        <path key={b.i} d={`M476.500 ${top(b.i)}h3M476.500 ${bot(b.i)}h3`} stroke="#4a3ca8" />
      ) : (
        <path key={b.i} d={`M477.500 ${top(b.i)}V${bot(b.i)}`} stroke="#4a3ca8" strokeDasharray="2 2" />
      )
    )}
    {DIG.map(([i, f]) => (
      <path key={i} d={`M476.500 ${f === "H" || i === 3 || i > 16 ? top(i) : bot(i)}h3`} stroke="#d86a10" strokeWidth="1.200" />
    ))}
  </svg>
);

const RULER = Array.from({ length: 175 }, (_, k) => k);
const LABELS = [1, 2, 3, 4, 5, 6, 7, 8].map((k) => ({ x: X0 + 177.6 * k, t: `${k * 200000} ns` }));

const WaveFooter = () => (
  <svg width="1555" height="49" viewBox="335 861 1555 49" className="block shrink-0 font-['Roboto',sans-serif]" fill="none">
    <defs>
      <clipPath id="nsclip"><rect x="339" y="861" width="1550" height="49" /></clipPath>
    </defs>
    <path d={RULER.map((k) => (k % 10 === 0 ? `M${X0 + 8.88 * k} 862V870` : `M${X0 + 8.88 * k} 865V870`)).join("")} stroke="#1cae1c" strokeWidth="1.200" />
    <text x="336.500" y="886" fontSize="13.300" fill="#2fd016" clipPath="url(#nsclip)">ns</text>
    {LABELS.map((l) => (
      <text key={l.x} x={l.x} y="886" fontSize="13.300" fill="#2fd016" textAnchor="middle">{l.t}</text>
    ))}
    <path d={`M${X0} 889.500H${XEND}`} stroke="#666" />
    <rect x="476.500" y="861" width="3" height="28" fill="#f5c400" />
    <rect x="444.500" y="890.500" width="68" height="18.500" stroke="#c8a000" fill="#000" />
    <text x="478.500" y="904.500" fontSize="13.300" fill="#dcb400" textAnchor="middle">156530 ns</text>
  </svg>
);

/* ---------- main ---------- */
const VBar = () => <div className="w-[3px] shrink-0 bg-[#f2f2f2]" />;
const VBar4 = () => <div className="w-[4px] shrink-0 bg-[#f2f2f2]" />;
const HBar = () => <div className="h-[3px] shrink-0 bg-[#f6f6f6]" />;

const ScrollBtn = ({ up }: { up?: boolean }) => (
  <div className="h-[18px] shrink-0 flex items-center justify-center bg-[#f0f0f0] border border-t-white border-l-white border-b-[#8a8a8a] border-r-[#8a8a8a]">
    <svg width="11" height="6" viewBox="0 0 11 6">
      <path d={up ? "M5.500 0L11 6H0z" : "M0 0h11L5.500 6z"} fill="#111" />
    </svg>
  </div>
);

const Main = () => (
  <div className="flex-1 min-h-0 flex flex-col bg-[#e8e8e8] pt-[3px]">
    {/* header */}
    <div className="h-[24px] shrink-0 flex pl-[5px]">
      <div className="w-[198px] shrink-0 bg-[#808080] flex items-center pl-[9px]">
        <svg width="20" height="22" viewBox="0 0 20 22" className="shrink-0 block">
          <path d="M8 0l6 5-6 6-6-6z" fill="#b020c0" />
          <path d="M13 7h7v9h-7z" fill="#1a9a3a" />
          <path d="M9 8l7 7-7 7-7-7z" fill="#1060e0" />
          <circle cx="11" cy="8" r="4" fill="#20d0e8" />
        </svg>
        <svg width="8" height="5" viewBox="0 0 8 5" className="ml-[5px] mt-[5px] shrink-0 block"><path d="M0 0h8L4 4.500z" fill="#111" /></svg>
      </div>
      <VBar />
      <div className="w-[125px] shrink-0 bg-[#808080] flex items-center justify-end pr-[7px] pt-[1px] text-[13px] text-[#dcdcdc]">Msgs</div>
      <VBar4 />
      <div className="w-[1555px] shrink-0 bg-black relative">
        <div className="absolute left-[141.500px] top-[2px] bottom-0 w-[3px] bg-[#f5c400]" />
      </div>
      <VBar4 />
      <div className="w-[20px] shrink-0 bg-[#808080]" />
    </div>
    <HBar />
    {/* body */}
    <div className="h-[722px] shrink-0 flex pl-[5px]">
      <div className="w-[198px] shrink-0 flex">
        <div className="w-[10px] shrink-0 bg-white" />
        <div className="flex-1 bg-[#808080] pt-[3px]">
          {SIGNALS.map((s) => (
            <NameRow key={s.n} s={s} />
          ))}
          <div className="relative ml-[3px] w-[179px] h-[2px] bg-[#333]">
            <svg width="5" height="8" viewBox="0 0 5 8" className="absolute left-0 -top-[3px]"><path d="M.5 .5L4.500 4 .5 7.500z" fill="#777" stroke="#222" /></svg>
          </div>
        </div>
      </div>
      <VBar />
      <div className="w-[125px] shrink-0 bg-[#808080] pt-[3px]">
        {SIGNALS.map((s) => (
          <div key={s.n} className="h-[28.75px] flex items-center pl-[3px] text-[13px] text-[#e8e8e8] whitespace-nowrap">{s.v}</div>
        ))}
        <div className="ml-[3px] w-[117px] h-[2px] bg-[#333]" />
      </div>
      <VBar4 />
      <div className="w-[1555px] shrink-0 bg-black">
        <WaveBody />
      </div>
      <VBar4 />
      <div className="w-[20px] shrink-0 flex flex-col bg-[#ececec]">
        <ScrollBtn up />
        <div className="flex-1 border border-[#dcdcdc] bg-[#f2f2f2]" />
        <ScrollBtn />
        <div className="h-[3px] shrink-0" />
      </div>
    </div>
    <HBar />
    {/* footer */}
    <div className="h-[49px] shrink-0 flex pl-[5px]">
      <div className="w-[198px] shrink-0 flex flex-col bg-[#808080]">
        <div className="h-[27px] flex items-center relative pl-[10px]">
          <svg width="46" height="18" viewBox="0 0 46 18" className="shrink-0 block">
            <path d="M2 12l4-4 2 2 2-8 2 8 1 3H2z" fill="#7890b0" />
            <path d="M17 3h13v11h-6l-3 3v-3h-4z" fill="#5a9ae0" />
            <path d="M19 6h9M19 9h6" stroke="#e8f0fa" />
            <circle cx="37" cy="9" r="7" fill="#58b050" stroke="#a8d8a0" />
            <path d="M33.500 9h7M37 5.500v7" stroke="#fff" strokeWidth="1.500" />
          </svg>
          <span className="ml-auto pr-[13px] text-[14px] text-[#dedede]">Now</span>
        </div>
        <div className="h-[22px] flex">
          <div className="w-[60px] shrink-0 flex items-center pl-[15px]">
            <svg width="46" height="18" viewBox="0 0 46 18" className="shrink-0 block">
              <path d="M3 8V5a4 4 0 0 1 8 0" stroke="#c8c8c8" strokeWidth="1.500" fill="none" />
              <path d="M1 8h13v10H1z" fill="#e8a820" />
              <path d="M27 3a4 4 0 0 0-3 6l-7 7 2 2 7-7a4 4 0 0 0 5-5l-3 2-2-2z" fill="#5a9ae0" />
              <circle cx="39" cy="9" r="6.500" fill="#e03030" stroke="#f0a0a0" />
              <path d="M35.500 9h7" stroke="#fff" strokeWidth="1.500" />
            </svg>
          </div>
          <div className="flex-1 bg-white flex items-center justify-end pr-[13px] text-[14px] text-[#111]">Cursor 1</div>
        </div>
      </div>
      <VBar />
      <div className="w-[125px] shrink-0 flex flex-col">
        <div className="h-[27px] flex items-center justify-end pr-[12px] bg-[#808080] text-[14px] text-[#e4e4e4]">2200000 ns</div>
        <div className="h-[22px] flex items-center justify-end pr-[12px] bg-white text-[14px] text-[#111]">156530 ns</div>
      </div>
      <VBar4 />
      <div className="w-[1555px] shrink-0 bg-black">
        <WaveFooter />
      </div>
      <VBar4 />
      <div className="w-[20px] shrink-0 bg-[#808080]" />
    </div>
    <div className="h-[5px] shrink-0 bg-[#dcdcdc]" />
  </div>
);

export default function App() {
  return (
    <div className="w-[1919px] h-[915px] overflow-hidden flex flex-col font-['Roboto',sans-serif] bg-[#efefef] blur-[0.35px]">
      <TitleBar />
      <Toolbars />
      <Main />
    </div>
  );
}
